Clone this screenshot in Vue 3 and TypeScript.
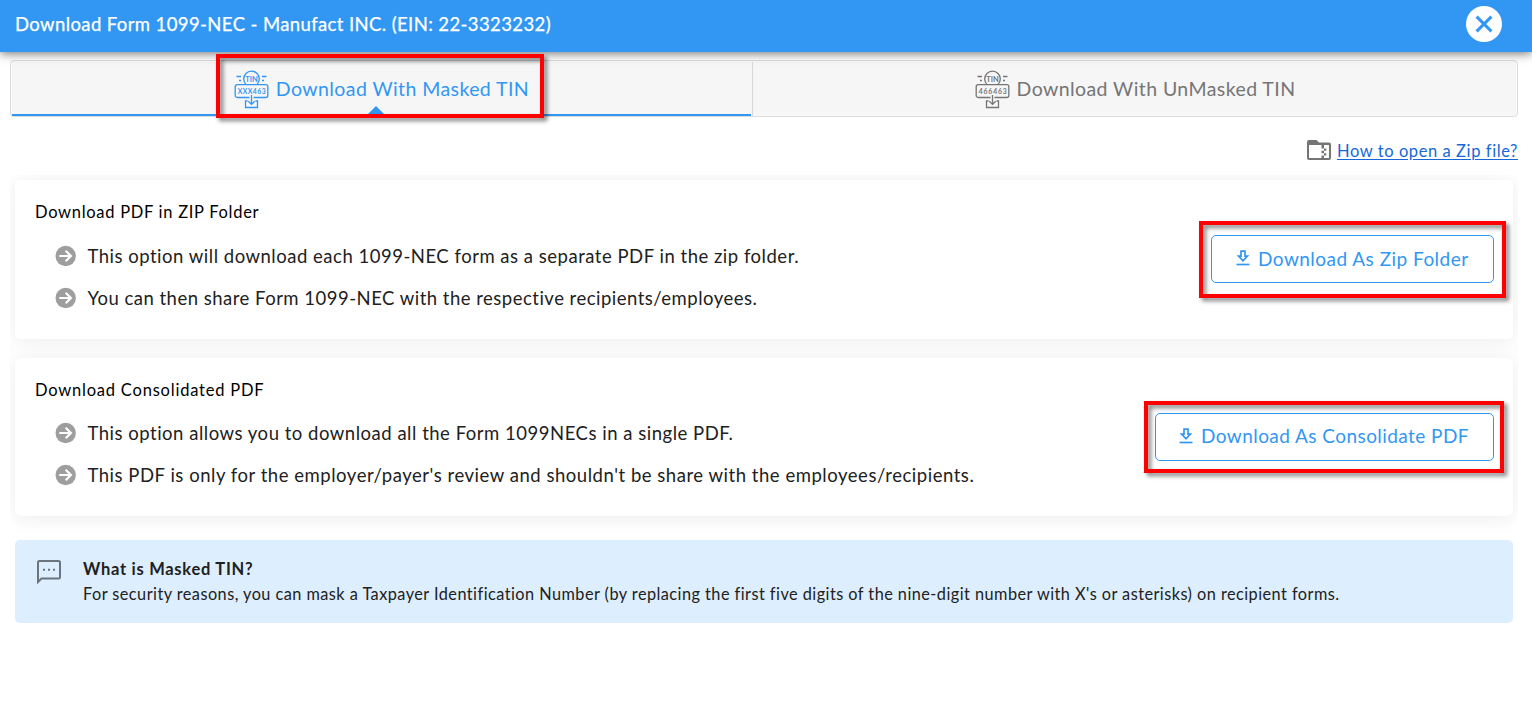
<script setup lang="ts">
interface Tab {
  id: string
  label: string
  digits: string
  active: boolean
}

interface Option {
  id: string
  title: string
  points: { id: string; text: string }[]
  action: string
}

const tabs: Tab[] = [
  { id: 'masked', label: 'Download With Masked TIN', digits: 'XXX463', active: true },
  { id: 'unmasked', label: 'Download With UnMasked TIN', digits: '466463', active: false },
]

const options: Option[] = [
  {
    id: 'zip',
    title: 'Download PDF in ZIP Folder',
    points: [
      { id: 'p1', text: 'This option will download each 1099-NEC form as a separate PDF in the zip folder.' },
      { id: 'p2', text: 'You can then share Form 1099-NEC with the respective recipients/employees.' },
    ],
    action: 'Download As Zip Folder',
  },
  {
    id: 'single',
    title: 'Download Consolidated PDF',
    points: [
      { id: 'p3', text: 'This option allows you to download all the Form 1099NECs in a single PDF.' },
      { id: 'p4', text: "This PDF is only for the employer/payer's review and shouldn't be share with the employees/recipients." },
    ],
    action: 'Download As Consolidate PDF',
  },
]
</script>

<template>
  <div class="page">
    <header class="header">
      <h1>Download Form 1099-NEC - Manufact INC. (EIN: 22-3323232)</h1>
      <button class="close" aria-label="Close">
        <svg width="18" height="18" viewBox="0 0 18 18">
          <path d="M1.6 1.6 16.4 16.4M16.4 1.6 1.6 16.4" fill="none" stroke="currentColor" stroke-width="3" />
        </svg>
      </button>
    </header>

    <nav class="tabs">
      <div v-for="tab in tabs" :key="tab.id" class="tab" :class="[tab.id, { active: tab.active }]">
        <svg class="tin" width="36" height="40" viewBox="0 0 36 40">
          <g fill="none" stroke="currentColor" stroke-width="1.3">
            <path d="M12.1 14.6A7.800 7.800 0 1 1 22.900 14.600" />
            <path d="M2.500 6.500h4.500M28 6.500h4.500M5 10.500h2M28 10.500h2" />
            <path d="M15.500 27.500H3.200a2 2 0 0 1-2-2V16.600a2 2 0 0 1 2-2H31.800a2 2 0 0 1 2 2V25.500a2 2 0 0 1-2 2H19.500" />
            <path d="M17.500 25v9.300M14.300 31.200l3.200 3.200 3.200-3.200M13.500 31H11.500V37.500H23.500V31H21.500" />
          </g>
          <text class="name" x="17.500" y="11.500">TIN</text>
          <text class="digits" x="17.700" y="23.500" textLength="28">{{ tab.digits }}</text>
        </svg>
        <span>{{ tab.label }}</span>
        <i v-if="tab.active" class="pointer"></i>
      </div>
      <div class="frame frame-tab"></div>
    </nav>

    <div class="help">
      <svg width="24" height="20" viewBox="0 0 24 20">
        <path fill="currentColor" fill-rule="evenodd" d="M2 0H9.500L12 2.500H22a2 2 0 0 1 2 2V18a2 2 0 0 1-2 2H2a2 2 0 0 1-2-2V2a2 2 0 0 1 2-2zM2 5V18H14.500V15.600H17V13.200H14.500V10.800H17V8.400H14.500V5zM17 5V8.400H19.300V10.800H17V13.200H19.300V15.600H17V18H22V5z" />
      </svg>
      <a href="#">How to open a Zip file?</a>
    </div>

    <main class="options">
      <section v-for="option in options" :key="option.id" class="card" :class="option.id">
        <div>
          <h2>{{ option.title }}</h2>
          <ul>
            <li v-for="point in option.points" :key="point.id">
              <svg width="22" height="22" viewBox="0 0 22 22">
                <circle cx="10.700" cy="11" r="10.200" fill="#9e9e9e" />
                <path d="M4.300 11H15.700M10.700 5.800 15.900 11 10.700 16.200" fill="none" stroke="#fff" stroke-width="2.200" />
              </svg>
              <span :class="point.id">{{ point.text }}</span>
            </li>
          </ul>
        </div>
        <button class="action">
          <svg width="14" height="16" viewBox="0 0 14 16">
            <path d="M5 1.200H9V6.200H11.400L7 10.800 2.600 6.200H5z" fill="none" stroke="currentColor" stroke-width="1.700" />
            <path d="M.5 14.500H13.500" stroke="currentColor" stroke-width="1.700" />
          </svg>
          <span>{{ option.action }}</span>
          <i class="frame"></i>
        </button>
      </section>
    </main>

    <aside class="info">
      <svg width="24" height="24" viewBox="0 0 24 24">
        <path d="M1 22V2.500A1.500 1.500 0 0 1 2.500 1H21.500A1.500 1.500 0 0 1 23 2.500V17A1.500 1.500 0 0 1 21.500 18.500H4.500z" fill="none" stroke="currentColor" stroke-width="2" />
        <path d="M6 8.700h2v2H6zM11 8.700h2v2H11zM16 8.700h2v2H16z" fill="currentColor" />
      </svg>
      <div>
        <strong>What is Masked TIN?</strong>
        <p>For security reasons, you can mask a Taxpayer Identification Number (by replacing the first five digits of the nine-digit number with X's or asterisks) on recipient forms.</p>
      </div>
    </aside>
  </div>
</template>

<style>
body {
  background: #fff;
}
</style>

<style scoped>
.page {
  height: 725px;
  overflow: hidden;
  font-family: Lato, "Liberation Sans", sans-serif;
  color: #212121;
}

.header {
  position: relative;
  z-index: 1;
  display: flex;
  align-items: center;
  justify-content: space-between;
  box-sizing: border-box;
  height: 52px;
  padding: 0 30px 4px 15px;
  background: #3297f3;
  box-shadow: 0 1px 10px rgba(0, 0, 0, 0.6);
  color: #fff;
}

h1 {
  margin: 0;
  font-size: 18.5px;
  font-weight: 400;
  line-height: 24px;
  letter-spacing: 0.39px;
  -webkit-text-stroke: 0.25px #fff;
}

.close {
  display: grid;
  place-items: center;
  width: 36px;
  height: 36px;
  padding: 0;
  border: 0;
  border-radius: 50%;
  background: #fff;
  color: #3297f3;
}

.tabs {
  position: relative;
  display: flex;
  box-sizing: border-box;
  width: 1508px;
  height: 57px;
  margin: 8px 0 0 10px;
  padding: 1px 0 0 1px;
  border: 1px solid #ddd;
  border-radius: 4px;
  background: #f6f6f6;
  box-shadow: inset 0 0 0 1px #fafafa;
}

.tab {
  position: relative;
  display: flex;
  align-items: center;
  justify-content: center;
  gap: 6px;
  box-sizing: border-box;
  height: 54px;
  color: #757575;
  font-size: 19.5px;
}

.tab span {
  margin-top: -1px;
  letter-spacing: 0.42px;
}

.tin {
  position: relative;
  top: 1px;
}

.tab.masked {
  width: 739px;
  padding-top: 2px;
  border-bottom: 2px solid #3297f3;
  color: #3297f3;
}

.tab.unmasked {
  flex: 1;
  margin-left: 1px;
  border-left: 1px solid #d6d6d6;
}

.tin .name {
  fill: currentColor;
  font-size: 7.5px;
  font-weight: 700;
  text-anchor: middle;
}

.tin .digits {
  fill: currentColor;
  font-size: 6.8px;
  font-weight: 700;
  text-anchor: middle;
}

.pointer {
  position: absolute;
  bottom: 0;
  left: 356px;
  border: solid transparent;
  border-width: 0 8px 8px;
  border-bottom-color: #3297f3;
}

.frame {
  position: absolute;
  z-index: 2;
  box-sizing: border-box;
  border: 4px solid #f00;
  filter: drop-shadow(3px 3px 2px rgba(0, 0, 0, 0.5));
  pointer-events: none;
}

.frame-tab {
  top: -7px;
  left: 205px;
  width: 328px;
  height: 64px;
}

.help {
  display: flex;
  align-items: center;
  justify-content: flex-end;
  gap: 6px;
  box-sizing: border-box;
  height: 58px;
  padding: 8px 14px 0 0;
  color: #757575;
  line-height: 20px;
}

.help a {
  margin-top: 1px;
  color: #1668d8;
  font-size: 16.5px;
  letter-spacing: 0.58px;
  text-underline-offset: 2px;
}

.options {
  display: flex;
  flex-direction: column;
  gap: 19px;
  width: 1498px;
  margin-left: 10px;
  padding: 5px 5px 24px;
  overflow: hidden;
}

.card {
  display: flex;
  align-items: flex-start;
  justify-content: space-between;
  box-sizing: border-box;
  height: 159px;
  padding: 22px 19px 0 20px;
  border-radius: 5px;
  background: #fff;
  box-shadow: 0 2px 20px rgba(0, 0, 0, 0.08);
}

.card.single {
  height: 158px;
}

h2 {
  margin: 0;
  color: #000;
  font-size: 16.5px;
  font-weight: 400;
  line-height: 20px;
  letter-spacing: 0.71px;
}

.single h2 {
  letter-spacing: 0.79px;
}

ul {
  margin: 13px 0 0;
  padding: 0 0 0 20px;
  list-style: none;
}

.single ul {
  margin-top: 12px;
}

li {
  display: flex;
  align-items: center;
  gap: 10.4px;
  height: 42px;
  font-size: 18.5px;
}

.p1 {
  letter-spacing: 0.51px;
}

.p2 {
  letter-spacing: 0.49px;
}

.p3 {
  letter-spacing: 0.515px;
}

.p4 {
  letter-spacing: 0.53px;
}

.action {
  position: relative;
  display: flex;
  align-items: center;
  gap: 8px;
  box-sizing: border-box;
  height: 48px;
  margin-top: 33px;
  padding: 0 24px 2px;
  border: 1px solid #3297f3;
  border-radius: 5px;
  background: #fff;
  color: #3297f3;
  font-family: inherit;
  font-size: 19px;
  letter-spacing: 0.47px;
}

.zip .action {
  width: 283px;
}

.single .action {
  width: 339px;
  padding: 0 22px 3px 23px;
  letter-spacing: 0.44px;
}

.zip .frame {
  top: -15px;
  left: -13px;
  width: 307px;
  height: 77px;
}

.single .frame {
  top: -13px;
  left: -12px;
  width: 360px;
  height: 72px;
}

.info {
  display: flex;
  gap: 22px;
  box-sizing: border-box;
  width: 1498px;
  height: 83px;
  margin-left: 15px;
  padding: 17px 0 0 22px;
  border-radius: 5px;
  background: #def;
}

.info svg {
  margin-top: 3px;
  color: #6b737c;
}

.info strong,
.info p {
  display: block;
  margin: 0;
  font-size: 16.3px;
  line-height: 24px;
  letter-spacing: 0.457px;
}

.info strong {
  font-size: 16.5px;
  line-height: 25px;
  letter-spacing: 0.72px;
}
</style>
